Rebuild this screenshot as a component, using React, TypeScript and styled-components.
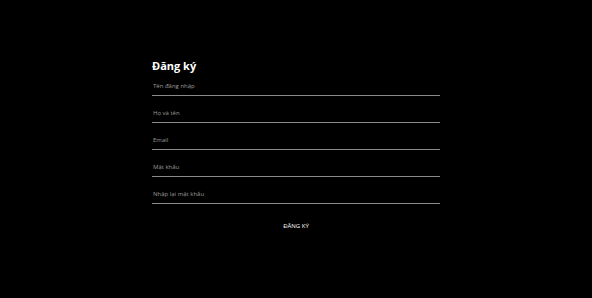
import React from 'react'
import styled, { createGlobalStyle } from "styled-components";

const GlobalStyle = createGlobalStyle`
  html, body {
    margin: 0;
    padding: 0;
    background-color: #000;
  }
  body {
    font-family: "Open Sans", "Noto Sans", sans-serif;
  }
`

const fields = [
  { name: "username", type: "text", placeholder: "Tên đăng nhập" },
  { name: "fullname", type: "text", placeholder: "Họ và tên" },
  { name: "email", type: "email", placeholder: "Email" },
  { name: "password", type: "password", placeholder: "Mật khẩu" },
  { name: "confirm", type: "password", placeholder: "Nhập lại mật khẩu" },
]

export default function App() {
  return (
    <Page>
      <GlobalStyle />
      <Form onSubmit={(e) => e.preventDefault()}>
        <Title>Đăng ký</Title>
        <FieldList>
          {
            fields.map((field) => {
              return <Input
                key={field.name}
                name={field.name}
                type={field.type}
                placeholder={field.placeholder}
              />
            })
          }
        </FieldList>
        <SubmitButton type="submit">Đăng ký</SubmitButton>
      </Form>
    </Page>
  )
}

const Page = styled.div`
  width: 100%;
  height: 100vh;
  background-color: #000;
  display: flex;
  justify-content: center;
  align-items: flex-start;
`

const Form = styled.form`
  width: 288px;
  margin-top: 58px;
  display: flex;
  flex-direction: column;
`

const Title = styled.h1`
  margin: 0;
  color: #fff;
  font-size: 11px;
  font-weight: 700;
  line-height: 15px;
`

const FieldList = styled.div`
  display: flex;
  flex-direction: column;
  gap: 8px;
  margin-top: 4px;
`

const Input = styled.input`
  box-sizing: border-box;
  height: 19px;
  padding: 0 1px;
  background: transparent;
  border: none;
  border-bottom: 1px solid #8a8a8a;
  color: #fff;
  font-family: "Open Sans", "Noto Sans", sans-serif;
  font-size: 6px;
  outline: none;

  &::placeholder {
    color: #9a9a9a;
  }
`

const SubmitButton = styled.button`
  align-self: center;
  margin-top: 14px;
  padding: 4px 8px;
  background: transparent;
  border: none;
  color: #fff;
  font-family: "Open Sans", "Noto Sans", sans-serif;
  font-size: 6px;
  line-height: 8px;
  text-transform: uppercase;
  cursor: pointer;
`
